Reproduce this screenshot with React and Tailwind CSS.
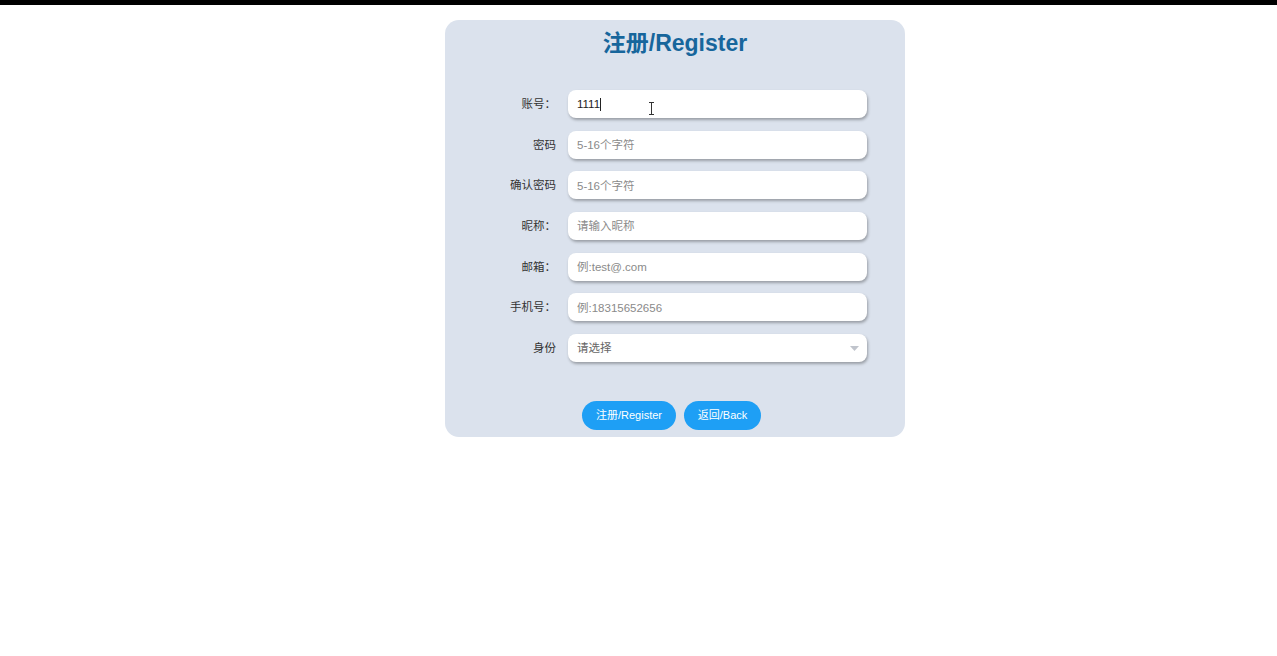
import React from 'react';

const FONT = { fontFamily: '"Liberation Sans", "Noto Sans CJK SC", Arial, sans-serif' };

const FIELDS = [
  { label: '密码', placeholder: '5-16个字符' },
  { label: '确认密码', placeholder: '5-16个字符' },
  { label: '昵称：', placeholder: '请输入昵称' },
  { label: '邮箱：', placeholder: '例:test@.com' },
  { label: '手机号：', placeholder: '例:18315652656' },
];

const boxCls = 'w-[299px] h-[28px] rounded-[8px] bg-white shadow-[1px_2px_3px_rgba(0,0,0,0.3)] px-[9px] pt-[1px] text-[11.5px] outline-none';

function Row({ label, children }) {
  return (
    <div className="flex items-center">
      <label className="w-[111px] text-right text-[11.5px] text-[#333] pt-[1px]">{label}</label>
      <div className="ml-[12px]">{children}</div>
    </div>
  );
}

export default function App() {
  return (
    <div className="min-h-screen bg-white" style={FONT}>
      <div className="h-[5px] bg-black" />
      <div className="pl-[445px] pt-[15px]">
        <div className="w-[460px] h-[417px] rounded-[14px] bg-[#dbe2ed] flex flex-col">
          <h1 className="pt-[8px] text-center text-[23px] leading-[30px] font-bold text-[#17669c]">注册/Register</h1>

          <div className="mt-[32px] flex flex-col gap-[12.67px]">
            <Row label="账号：">
              <div className={boxCls + ' relative flex items-center text-[#222]'}>
                <span>1111</span>
                <span className="inline-block w-px h-[13px] bg-[#222]" />
                {/* mouse I-beam */}
                <svg className="absolute left-[80px] top-[12px]" width="7" height="13" viewBox="0 0 7 13">
                  <path d="M1 0.5h5M3.5 0.5v12M1 12.5h5" stroke="#333" strokeWidth="1" fill="none" />
                </svg>
              </div>
            </Row>
            {FIELDS.map(f => (
              <Row key={f.label + f.placeholder} label={f.label}>
                <input className={boxCls + ' placeholder:text-[#8a8a8a] text-[#222]'} placeholder={f.placeholder} />
              </Row>
            ))}
            <Row label="身份">
              <div className={boxCls + ' flex items-center justify-between text-[#666]'}>
                <span>请选择</span>
                <svg width="9" height="5" viewBox="0 0 9 5" className="mr-[-1px]">
                  <path d="M0 0h9L4.5 5z" fill="#c0c4cc" />
                </svg>
              </div>
            </Row>
          </div>

          <div className="mt-[39px] flex justify-center gap-[8px] pr-[7px]">
            <button className="w-[94px] h-[29px] rounded-full bg-[#1e9ff5] text-white text-[11px]">注册/Register</button>
            <button className="w-[77px] h-[29px] rounded-full bg-[#1e9ff5] text-white text-[11px]">返回/Back</button>
          </div>
        </div>
      </div>
    </div>
  );
}
